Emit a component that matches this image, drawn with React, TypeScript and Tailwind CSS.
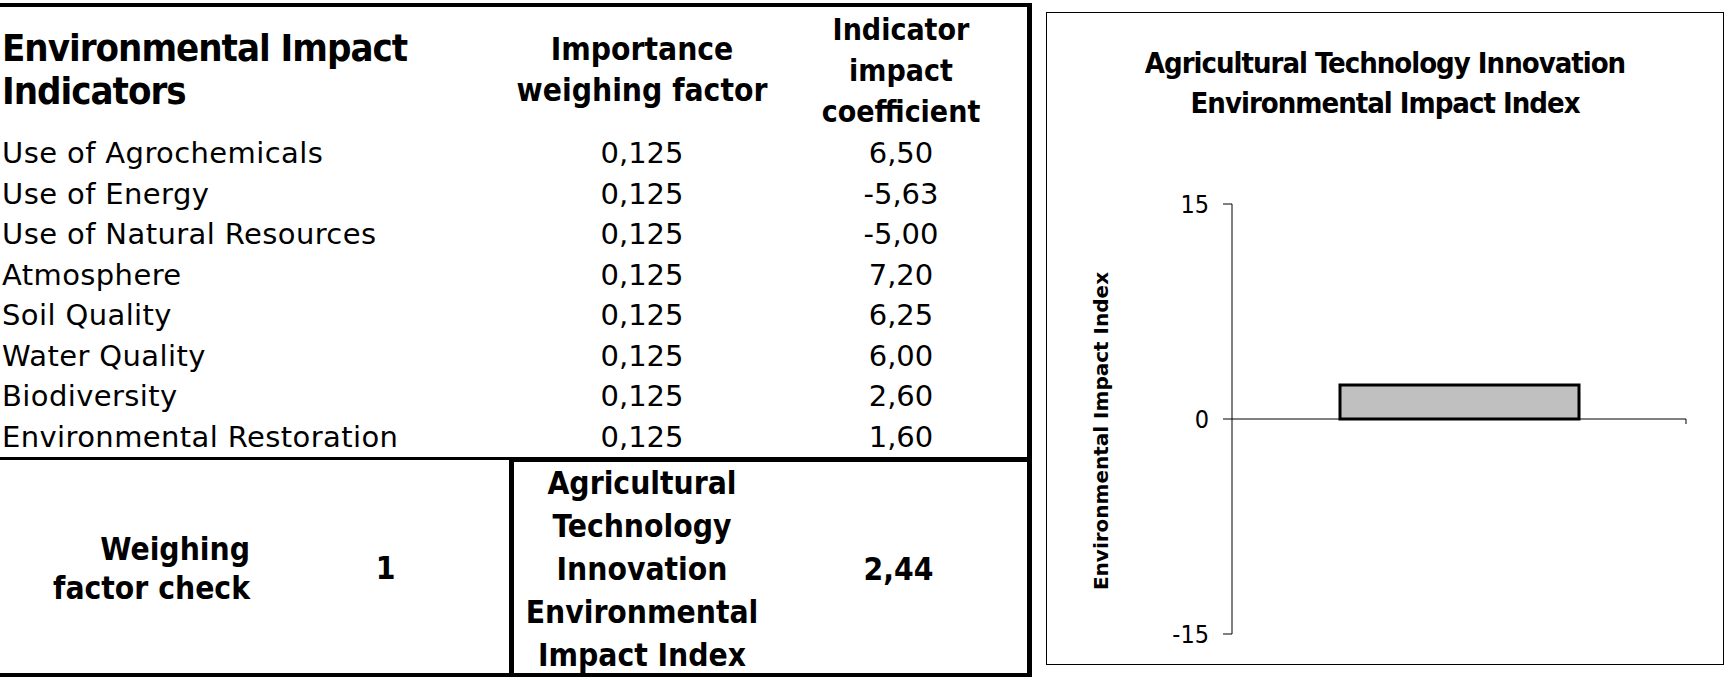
import React from 'react';

const rows = [
  ['Use of Agrochemicals', '0,125', '6,50'],
  ['Use of Energy', '0,125', '-5,63'],
  ['Use of Natural Resources', '0,125', '-5,00'],
  ['Atmosphere', '0,125', '7,20'],
  ['Soil Quality', '0,125', '6,25'],
  ['Water Quality', '0,125', '6,00'],
  ['Biodiversity', '0,125', '2,60'],
  ['Environmental Restoration', '0,125', '1,60'],
];

// y positions of the chart, relative to the svg
const zeroY = 296;
const topY = 81;
const bottomY = 511;
const axisX = 185;

const Chart = () => (
  <div className="ml-[14px] mt-[9px] w-[678px] h-[653px] border border-black flex flex-col">
    <div className="pt-[30px] text-center font-bold text-[29px] tracking-[-1px] leading-[40px] font-['DejaVu_Sans_Condensed','DejaVu_Sans',sans-serif]">
      Agricultural Technology Innovation
      <br />
      Environmental Impact Index
    </div>
    <svg width="676" height="540" viewBox="0 0 676 540">
      <line x1={axisX} y1={topY} x2={axisX} y2={bottomY} stroke="#000" strokeWidth="1" />
      <line x1={axisX - 9} y1={topY} x2={axisX} y2={topY} stroke="#000" strokeWidth="1" />
      <line x1={axisX - 9} y1={bottomY} x2={axisX} y2={bottomY} stroke="#000" strokeWidth="1" />
      <line x1={axisX - 9} y1={zeroY} x2={639} y2={zeroY} stroke="#000" strokeWidth="1" />
      <line x1={639} y1={zeroY} x2={639} y2={zeroY + 5} stroke="#000" strokeWidth="1" />
      <rect x="293" y="262" width="239" height="34" fill="#c0c0c0" stroke="#000" strokeWidth="3" />
      <g fontFamily="'DejaVu Sans Condensed','DejaVu Sans',sans-serif" fontSize="25" textAnchor="end">
        <text x="162" y={topY + 9}>15</text>
        <text x="162" y={zeroY + 9}>0</text>
        <text x="162" y={bottomY + 9}>-15</text>
      </g>
      <text
        x="54"
        y="308"
        transform="rotate(-90 54 308)"
        textAnchor="middle"
        dominantBaseline="central"
        fontFamily="'DejaVu Sans',sans-serif"
        fontWeight="bold"
        fontSize="20"
      >
        Environmental Impact Index
      </text>
    </svg>
  </div>
);

const App = () => {
  return (
    <div className="flex w-[1731px] h-[677px] bg-white text-black pt-[3px]">
      <div className="w-[1032px] h-[674px] border-t-4 border-r-[5px] border-b-4 border-black flex flex-col">
        <div className="grid grid-cols-[509px_266px_1fr] h-[126px] shrink-0 items-center font-bold font-['DejaVu_Sans_Condensed','DejaVu_Sans',sans-serif]">
          <div className="pl-[2px] text-[38px] tracking-[-1px] leading-[43px] whitespace-nowrap">
            Environmental Impact
            <br />
            Indicators
          </div>
          <div className="text-center text-[31.5px] leading-[41px] whitespace-nowrap">
            Importance
            <br />
            weighing factor
          </div>
          <div className="text-center text-[30px] leading-[41px] whitespace-nowrap">
            Indicator
            <br />
            impact
            <br />
            coefficient
          </div>
        </div>

        {rows.map(([name, weight, coef]) => (
          <div
            key={name}
            className="grid grid-cols-[509px_266px_1fr] h-[40.5px] shrink-0 items-center text-[29px] leading-[40px] font-['DejaVu_Sans',sans-serif]"
          >
            <div className="pl-[2px] tracking-[0.4px] whitespace-nowrap">{name}</div>
            <div className="text-center">{weight}</div>
            <div className="text-center">{coef}</div>
          </div>
        ))}

        <div className="flex flex-1 font-bold text-[31.5px] font-['DejaVu_Sans_Condensed','DejaVu_Sans',sans-serif]">
          <div className="w-[509px] border-t-[3px] border-black grid grid-cols-[262px_1fr] items-center">
            <div className="text-right pr-[12px] leading-[39px]">
              Weighing
              <br />
              factor check
            </div>
            <div className="text-center">1</div>
          </div>
          <div className="flex-1 border-t-[5px] border-l-[5px] border-black grid grid-cols-[256px_1fr] items-center">
            <div className="text-center leading-[43px] whitespace-nowrap">
              Agricultural
              <br />
              Technology
              <br />
              Innovation
              <br />
              Environmental
              <br />
              Impact Index
            </div>
            <div className="text-center">2,44</div>
          </div>
        </div>
      </div>

      <Chart />
    </div>
  );
};

export default App;
